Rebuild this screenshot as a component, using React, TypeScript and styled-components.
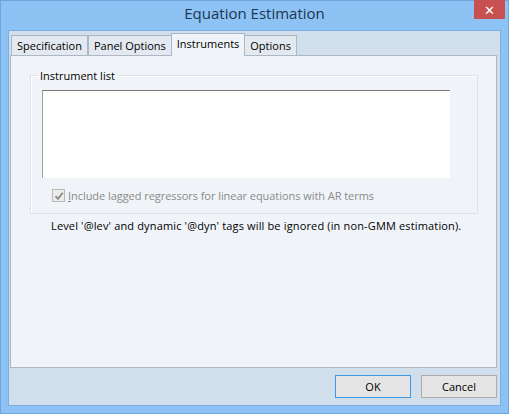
import React from "react";
import styled, { createGlobalStyle } from "styled-components";

const Global = createGlobalStyle`
  html, body { margin: 0; padding: 0; background: #ffffff; }
  body { font-family: "Open Sans", "DejaVu Sans", sans-serif; }
`;

const Frame = styled.div`
  width: 509px;
  height: 414px;
  box-sizing: border-box;
  background: #8cc2f4;
  border: 1px solid #6ea6dc;
  display: flex;
  flex-direction: column;
  padding: 0 7px 7px 7px;
`;

const TitleBar = styled.div`
  height: 29px;
  flex: none;
  position: relative;
  display: flex;
  align-items: center;
  justify-content: center;
  font-size: 15px;
  color: #1f3550;
  padding-bottom: 6px;
  box-sizing: border-box;
`;

const CloseButton = styled.div`
  position: absolute;
  right: -4px;
  top: -1px;
  width: 31px;
  height: 19px;
  background: #c75050;
  color: #ffffff;
  display: flex;
  align-items: center;
  justify-content: center;
  font-size: 13px;
  font-weight: 700;
`;

const Client = styled.div`
  flex: 1;
  background: #d1deec;
  border: 1px solid #7aaee0;
  display: flex;
  flex-direction: column;
  padding: 2px 3px 7px 1px;
`;

const TabRow = styled.div`
  display: flex;
  align-items: flex-end;
  height: 22px;
  padding-left: 1px;
`;

const Tab = styled.div<{ $active?: boolean }>`
  height: ${(p) => (p.$active ? 23 : 20)}px;
  box-sizing: border-box;
  padding: 0 5px;
  border: 1px solid #adb8c4;
  border-bottom: none;
  margin-left: ${(p) => (p.$active ? -1 : 0)}px;
  margin-right: ${(p) => (p.$active ? -1 : 0)}px;
  margin-bottom: ${(p) => (p.$active ? -1 : 0)}px;
  position: relative;
  z-index: ${(p) => (p.$active ? 2 : 1)};
  background: ${(p) => (p.$active ? "#f0f4f9" : "#e3e9f0")};
  font-size: 11px;
  color: #000;
  display: flex;
  align-items: ${(p) => (p.$active ? "flex-start" : "center")};
  padding-top: ${(p) => (p.$active ? 2 : 0)}px;
  & + & { border-left: ${(p) => (p.$active ? "1px solid #adb8c4" : "none")}; }
`;

const Page = styled.div`
  flex: 1;
  background: #f0f4f9;
  border: 1px solid #adb8c4;
  padding: 12px 18px 0 19px;
  display: flex;
  flex-direction: column;
`;

const Group = styled.fieldset`
  margin: 0;
  border: 1px solid #dfe3e8;
  padding: 0 27px 11px 11px;
  height: 146px;
  box-sizing: border-box;
  display: flex;
  flex-direction: column;
  box-shadow: inset 1px 1px 0 #ffffff;
`;

const Legend = styled.legend`
  font-size: 11px;
  padding: 0 3px 0 2px;
  margin-left: -4px;
  color: #000;
`;

const ListBox = styled.div`
  height: 87px;
  background: #ffffff;
  border-top: 1px solid #7a7a7a;
  border-left: 1px solid #a0a0a0;
  margin-top: 7px;
`;

const CheckRow = styled.label`
  display: flex;
  align-items: center;
  margin-top: 10px;
  margin-left: 10px;
  font-size: 11px;
  color: #8a8a8a;
  letter-spacing: -0.05px;
`;

const CheckBox = styled.span`
  width: 11px;
  height: 11px;
  border: 1px solid #b8b8b8;
  background: #ececec;
  margin-right: 3px;
  display: flex;
  align-items: center;
  justify-content: center;
`;

const Note = styled.div`
  font-size: 11px;
  color: #000;
  margin-top: 4px;
  margin-left: 21px;
  letter-spacing: 0.15px;
`;

const ButtonRow = styled.div`
  display: flex;
  justify-content: flex-end;
  gap: 10px;
  padding-top: 7px;
  padding-right: 0px;
`;

const Button = styled.div<{ $default?: boolean }>`
  width: 76px;
  height: 23px;
  box-sizing: border-box;
  border: 1px solid ${(p) => (p.$default ? "#3c97e4" : "#acacac")};
  background: #e5e5e5;
  font-size: 11px;
  color: #000;
  display: flex;
  align-items: center;
  justify-content: center;
`;

export default function App() {
  const tabs = ["Specification", "Panel Options", "Instruments", "Options"];
  return (
    <>
      <Global />
      <Frame>
        <TitleBar>
          Equation Estimation
          <CloseButton>✕</CloseButton>
        </TitleBar>
        <Client>
          <TabRow>
            {tabs.map((t) => (
              <Tab key={t} $active={t === "Instruments"}>
                {t}
              </Tab>
            ))}
          </TabRow>
          <Page>
            <Group>
              <Legend>Instrument list</Legend>
              <ListBox />
              <CheckRow>
                <CheckBox>
                  <svg width="10" height="10" viewBox="0 0 10 10">
                    <path d="M1.5 5.2 L4 7.8 L8.8 1.8" fill="none" stroke="#8a8a8a" strokeWidth="1.8" />
                  </svg>
                </CheckBox>
                <span>
                  <u>I</u>nclude lagged regressors for linear equations with AR terms
                </span>
              </CheckRow>
            </Group>
            <Note>
              Level '@lev' and dynamic '@dyn' tags will be ignored (in non-GMM estimation).
            </Note>
          </Page>
          <ButtonRow>
            <Button $default>OK</Button>
            <Button>Cancel</Button>
          </ButtonRow>
        </Client>
      </Frame>
    </>
  );
}
